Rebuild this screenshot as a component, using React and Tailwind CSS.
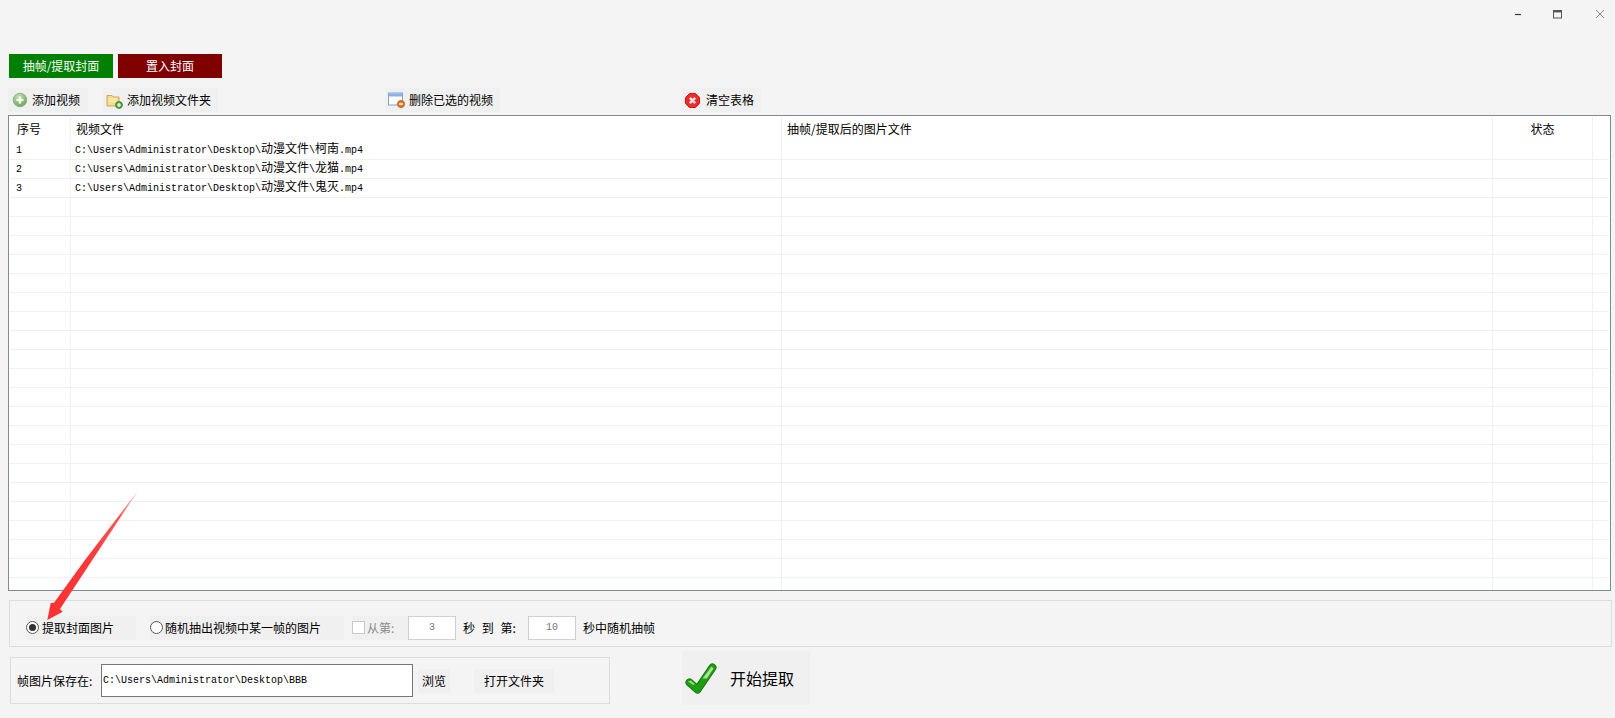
import React from "react";

const Txt = ({ s }) =>
  s.split(/([\u4e00-\u9fff]+)/).filter(Boolean).map((p, i) =>
    /[\u4e00-\u9fff]/.test(p)
      ? <span key={i} className="text-[12px]">{p}</span>
      : <span key={i} className="[font-family:'Liberation_Mono',monospace] text-[10px]">{p}</span>
  );

const Row = ({ n, path }) => (
  <div className="grid grid-cols-[61px_711px_711px_100px_1fr] h-[19px] shrink-0 border-b border-[#f0f0f0] text-black leading-[14px]">
    <div className="border-r border-[#f0f0f0] pl-[6px]"><Txt s={n} /></div>
    <div className="border-r border-[#f0f0f0] pl-[4px] whitespace-nowrap"><Txt s={path} /></div>
    <div className="border-r border-[#f0f0f0]" />
    <div className="border-r border-[#f0f0f0]" />
    <div />
  </div>
);

const PlusGreen = () => (
  <svg width="16" height="16" viewBox="0 0 16 16">
    <defs><radialGradient id="g1" cx="0.4" cy="0.3" r="0.8"><stop offset="0" stopColor="#c9e6b5" /><stop offset="1" stopColor="#5f9e4e" /></radialGradient></defs>
    <circle cx="8" cy="8" r="6.8" fill="url(#g1)" stroke="#8fb58a" />
    <path d="M8 4.6v6.8M4.6 8h6.8" stroke="#fff" strokeWidth="2.2" />
  </svg>
);
const FolderAdd = () => (
  <svg width="17" height="17" viewBox="0 0 17 17">
    <path d="M1 3.5h5l1.2 1.5H13v9H1z" fill="#f3dc8c" stroke="#c9a850" />
    <path d="M3 7h8M3 9.5h7" stroke="#fff6d0" />
    <circle cx="13" cy="13" r="3.4" fill="#5aa648" stroke="#3f8a35" />
    <path d="M13 11v4M11 13h4" stroke="#fff" strokeWidth="1.2" />
  </svg>
);
const WindowDel = () => (
  <svg width="17" height="16" viewBox="0 0 17 16">
    <rect x="0.5" y="1" width="14" height="12" fill="#fff" stroke="#7f9fd4" />
    <rect x="1" y="1.5" width="13" height="3" fill="#8fb0e6" />
    <circle cx="13" cy="12" r="3.5" fill="#e27a25" stroke="#c45f14" />
    <path d="M11 12h4" stroke="#fff" strokeWidth="1.4" />
  </svg>
);
const RedX = () => (
  <svg width="15" height="15" viewBox="0 0 15 15">
    <path d="M4.5 .5h6l4 4v6l-4 4h-6l-4-4v-6z" fill="#ef2b2b" stroke="#d01414" />
    <path d="M4.8 4.8l5.4 5.4M10.2 4.8l-5.4 5.4" stroke="#fbe4e4" strokeWidth="2.4" />
  </svg>
);
const Check = () => (
  <svg width="32" height="31" viewBox="0 0 32 31">
    <path d="M4.5 19.5 L12.5 26.5 L27.5 4.5" fill="none" stroke="#0b7a0b" strokeWidth="8" strokeLinecap="round" strokeLinejoin="round" />
    <path d="M4.5 19.5 L12.5 26.5 L27.5 4.5" fill="none" stroke="#1f9e12" strokeWidth="6" strokeLinecap="round" strokeLinejoin="round" />
    <path d="M17.5 15.5 L26.5 3.5 L28.5 5.5 L22 15.5 Z" fill="#a5e08a" />
    <path d="M3 18.5 L6 17.5 L10 21 L8 22 Z" fill="#8fd872" />
  </svg>
);

const Tool = ({ cls, icon, text }) => (
  <div className={"h-[24px] flex items-center bg-[#f0f0f0] text-[12px] text-black " + cls}>
    {icon}<span>{text}</span>
  </div>
);

const rows = Array.from({ length: 24 });

export default function App() {
  return (
    <div className="relative w-full h-[718px] overflow-hidden bg-[#f4f4f4] [font-family:'Noto_Sans_CJK_SC',sans-serif] text-[12px] text-black">
      <div className="h-[54px] flex justify-end">
        <svg width="110" height="24" viewBox="0 0 110 24" className="mt-[2px]">
          <path d="M10 12.5h6" stroke="#333" strokeWidth="1.2" />
          <rect x="48.5" y="8.5" width="8" height="7.5" fill="none" stroke="#555" />
          <rect x="48" y="8" width="9" height="2.4" fill="#555" />
          <path d="M91 8l8 8M99 8l-8 8" stroke="#777" strokeWidth="0.9" />
        </svg>
      </div>

      <div className="flex ml-[9px] gap-[5px] h-[24px]">
        <div className="w-[104px] flex items-center justify-center bg-[#008000] text-white">抽帧/提取封面</div>
        <div className="w-[104px] flex items-center justify-center bg-[#800000] text-white">置入封面</div>
      </div>

      <div className="flex mt-[10px] ml-[8px]">
        <Tool cls="w-[80px] pl-[4px] gap-[4px]" icon={<PlusGreen />} text="添加视频" />
        <Tool cls="w-[115px] ml-[15px] pl-[3px] gap-[4px]" icon={<FolderAdd />} text="添加视频文件夹" />
        <Tool cls="w-[115px] ml-[167px] pl-[3px] gap-[4px]" icon={<WindowDel />} text="删除已选的视频" />
        <Tool cls="w-[80px] ml-[181px] pl-[4px] gap-[6px]" icon={<RedX />} text="清空表格" />
      </div>

      <div className="mt-[3px] ml-[8px] w-[1603px] h-[476px] border border-[#808a90] bg-white p-px flex flex-col overflow-hidden">
        <div className="grid grid-cols-[61px_711px_711px_100px_1fr] h-[24px] shrink-0 leading-[24px]">
          <div className="border-r border-[#f0f0f0] pl-[7px]">序号</div>
          <div className="border-r border-[#f0f0f0] pl-[5px]">视频文件</div>
          <div className="border-r border-[#f0f0f0] pl-[5px]">抽帧/提取后的图片文件</div>
          <div className="border-r border-[#f0f0f0] text-center">状态</div>
          <div />
        </div>
        <Row n="1" path="C:\Users\Administrator\Desktop\动漫文件\柯南.mp4" />
        <Row n="2" path="C:\Users\Administrator\Desktop\动漫文件\龙猫.mp4" />
        <Row n="3" path="C:\Users\Administrator\Desktop\动漫文件\鬼灭.mp4" />
        {rows.map((_, i) => <Row key={i} n="" path="" />)}
      </div>

      <div className="mt-[9px] ml-[9px] w-[1603px] h-[47px] border border-[#dcdcdc] flex items-center pl-[16px] pt-[8px]">
        <div className="w-[110px] h-[24px] flex items-center bg-[#f0f0f0] gap-[3px]">
          <span className="w-[13px] h-[13px] rounded-full border border-[#555] bg-white flex items-center justify-center">
            <span className="w-[7px] h-[7px] rounded-full bg-[#333]" />
          </span>
          <span>提取封面图片</span>
        </div>
        <div className="w-[194px] ml-[14px] h-[24px] flex items-center bg-[#f0f0f0] gap-[2px]">
          <span className="w-[13px] h-[13px] rounded-full border border-[#555] bg-white" />
          <span>随机抽出视频中某一帧的图片</span>
        </div>
        <div className="w-[56px] ml-[8px] h-[24px] flex items-center bg-[#f0f0f0] gap-[2px] text-[#8a8a8a]">
          <span className="w-[13px] h-[13px] border border-[#c8c8c8] bg-white shrink-0" />
          <span>从第:</span>
        </div>
        <div className="w-[48px] h-[24px] border border-[#cfcfcf] bg-white text-center text-[#777] text-[10px] leading-[22px] [font-family:'Liberation_Mono',monospace]">3</div>
        <span className="ml-[7px] w-[65px] whitespace-pre [word-spacing:4px]">秒 到 第:</span>
        <div className="w-[48px] h-[24px] border border-[#cfcfcf] bg-white text-center text-[#777] text-[10px] leading-[22px] [font-family:'Liberation_Mono',monospace]">10</div>
        <span className="ml-[7px]">秒中随机抽帧</span>
      </div>

      <div className="flex mt-[4px] items-start">
        <div className="mt-[6px] ml-[10px] w-[600px] h-[47px] border border-[#dcdcdc] flex items-center pl-[6px]">
          <span className="w-[84px]">帧图片保存在:</span>
          <div className="w-[312px] h-[33px] border border-[#777] bg-white leading-[31px] pl-[1px] text-[10px] [font-family:'Liberation_Mono',monospace]">C:\Users\Administrator\Desktop\BBB</div>
          <div className="w-[32px] ml-[5px] h-[24px] flex items-center justify-center bg-[#f0f0f0]">浏览</div>
          <div className="w-[80px] ml-[24px] h-[24px] flex items-center justify-center bg-[#f0f0f0]">打开文件夹</div>
        </div>
        <div className="ml-[72px] w-[128px] h-[54px] bg-[#f0f0f0] flex items-center pl-[3px] gap-[13px]">
          <Check />
          <span className="text-[16px]">开始提取</span>
        </div>
      </div>

      <svg className="absolute left-0 top-0 pointer-events-none" width="200" height="718" viewBox="0 0 200 718">
        <defs><linearGradient id="ar" x1="138" y1="490" x2="47" y2="620" gradientUnits="userSpaceOnUse"><stop offset="0" stopColor="#ffc0c0" /><stop offset="0.2" stopColor="#fb5a5a" /><stop offset="0.5" stopColor="#fb3a3a" /><stop offset="1" stopColor="#fb3030" /></linearGradient></defs>
        <path d="M138.5 490 L60 609 L62.7 611.7 L47.3 620 L50.7 603 L54 602.7 L85 560 Z" fill="url(#ar)" />
      </svg>
    </div>
  );
}
